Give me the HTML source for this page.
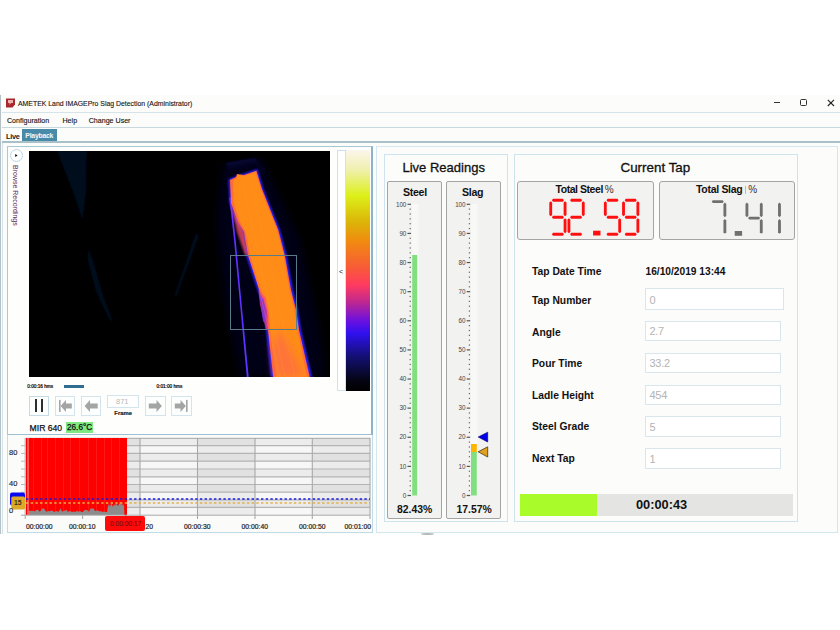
<!DOCTYPE html>
<html><head><meta charset="utf-8">
<style>
*{margin:0;padding:0;box-sizing:border-box}
html,body{width:840px;height:630px;overflow:hidden;background:#fff;font-family:"Liberation Sans",sans-serif;color:#111}
.a{position:absolute}
.t{position:absolute;white-space:pre;line-height:1}
</style></head><body>
<!-- window -->
<div class="a" style="left:0;top:95px;width:840px;height:439px;background:#fcfcfa"></div>
<div class="a" style="left:0;top:95px;width:1px;height:439px;background:#b4c0c5"></div>
<div class="a" style="left:2px;top:142px;width:1px;height:392px;background:#d3e3ea"></div>

<!-- title bar -->
<svg class="a" style="left:5px;top:98px" width="11" height="10" viewBox="0 0 11 10">
<path d="M1 0.5 H10 V6.5 L7.5 9.5 H1 Z" fill="#a8282c"/>
<path d="M3 2 H8 V5 H6 L4.5 7 V5 H3 Z" fill="#e8b0b0"/>
</svg>
<div class="t" style="left:18px;top:100.8px;font-size:6.9px;color:#111;-webkit-text-stroke:0.1px #111">AMETEK Land IMAGEPro Slag Detection (Administrator)</div>
<div class="a" style="left:773.5px;top:102px;width:6px;height:1.2px;background:#333"></div>
<div class="a" style="left:800px;top:99px;width:7px;height:7px;border:1.2px solid #333;border-radius:1.5px"></div>
<svg class="a" style="left:827px;top:98.5px" width="8" height="8" viewBox="0 0 8 8"><path d="M0.8 0.8 L7 7 M7 0.8 L0.8 7" stroke="#222" stroke-width="1.1"/></svg>
<div class="a" style="left:1.5px;top:112px;width:839px;height:1px;background:#d5e4ea"></div>

<!-- menu -->
<div class="t" style="left:7px;top:117.6px;font-size:7.1px;color:#111;-webkit-text-stroke:0.12px #111">Configuration</div>
<div class="t" style="left:62.5px;top:117.6px;font-size:7.1px;color:#111;-webkit-text-stroke:0.12px #111">Help</div>
<div class="t" style="left:88.7px;top:117.6px;font-size:7.1px;color:#111;-webkit-text-stroke:0.12px #111">Change User</div>
<div class="a" style="left:1.5px;top:127px;width:839px;height:1px;background:#c8d8df"></div>

<!-- tabs -->
<div class="t" style="left:6px;top:132.5px;font-size:7.4px;font-weight:700;letter-spacing:-0.3px;color:#222">Live</div>
<div class="a" style="left:22px;top:129px;width:35px;height:13px;background:#4a8aa9"></div>
<div class="t" style="left:25.3px;top:133.4px;font-size:6.9px;font-weight:700;letter-spacing:-0.25px;color:#f4f8fa">Playback</div>
<div class="a" style="left:1.5px;top:141.3px;width:839px;height:1.5px;background:#aac0c8"></div>

<!-- left video panel -->
<div class="a" style="left:6.5px;top:146px;width:366.5px;height:289.5px;border:1.5px solid #a9c8d6;border-right:2px solid #8fb3c6;border-bottom:2px solid #9fc0d0;background:#fefefd"></div>
<div class="a" style="left:10px;top:149px;width:13px;height:13px;border:1px solid #bcd8e4;border-radius:50%;background:#fff"></div>
<svg class="a" style="left:14px;top:153px" width="5" height="5"><path d="M1.2 1 L3.6 2.5 L1.2 4Z" fill="#111"/></svg>
<div class="t" style="left:13.7px;top:165px;font-size:7px;color:#5a2a5a;transform-origin:0 0;transform:rotate(90deg) translate(0,-5px)">Browse Recordings</div>

<!-- thermal image -->
<svg class="a" style="left:29px;top:151px" width="301" height="226" viewBox="29 151 301 226">
<defs>
<filter id="bl1" x="-50%" y="-50%" width="200%" height="200%"><feGaussianBlur stdDeviation="4"/></filter>
<filter id="bl2" x="-50%" y="-50%" width="200%" height="200%"><feGaussianBlur stdDeviation="1.2"/></filter>
<filter id="bl3" x="-50%" y="-50%" width="200%" height="200%"><feGaussianBlur stdDeviation="0.6"/></filter>
<clipPath id="vc"><rect x="29" y="151" width="301" height="226"/></clipPath>
</defs>
<rect x="29" y="151" width="301" height="226" fill="#000"/>
<g clip-path="url(#vc)">
<path d="M57 151 L87 151 L86 195 L82.5 221 L74 195 Z" fill="#05081e" filter="url(#bl2)"/>
<path d="M88 247 L93 260 L104 298 L114 323 L109 319 L96 292 L88 262 Z" fill="#05081c" filter="url(#bl2)"/>
<path d="M196 232 L174 296 L177 296 L199 236 Z" fill="#05081c" filter="url(#bl2)"/>
<path d="M226 163 L255 158 L266 172 L258 178 L232 182 Z" fill="#0a1050" filter="url(#bl2)"/>
<path d="M222 166 L262 158 L300 240 L320 330 L326 377 L240 377 L224 300 L216 220 Z" fill="#020418" filter="url(#bl1)"/>
<path d="M228.5 179 L257.5 169 L263.5 189 L280 230 L286.5 255 L293 290 L298 310 L301 330 L312 377 L271 377 L266 330 L265 310 L257.5 290 L246 255 L242 232 L236 222 L229.5 203 Z" fill="#3020ff" filter="url(#bl2)"/>
<path d="M229.3 198 L231 197 L235.7 240 L242.2 310 L248.7 377 L246.8 377 L240.6 310 L234 240 Z" fill="#6030ff" filter="url(#bl3)"/>
<path d="M231 203 L244 232 L247.9 255 L245 255 L237 232 Z" fill="#ff5060" opacity="0.75" filter="url(#bl2)"/>
<path d="M230 180 L236 177 L237 174 L244 175 L256.4 170.7 L262 189 L278.3 230 L284.7 255 L291 290 L296.1 310 L299 330 L309.7 377 L273.2 377 L268 330 L266.9 310 L259.3 290 L247.9 255 L244 232 L238 222 L231 203 Z" fill="#ff6a3a" filter="url(#bl3)"/>
<path d="M233 181 L237 178 L238 175 L244 176 L255.5 172 L261 190 L277 230 L283.5 255 L289.5 290 L294.5 310 L297.5 330 L307 377 L276 377 L270 330 L268.5 310 L261 290 L250 255 L246 232 L240 222 L233.5 203 Z" fill="#ff8c18" filter="url(#bl3)"/>
<path d="M280 330 L305 377 L274 377 L271 345 Z" fill="#ff5070" opacity="0.4" filter="url(#bl1)"/>
<path d="M258.5 290 L266 298 L269 330 L266 330 L260 305 Z" fill="#ff4a7a" opacity="0.7" filter="url(#bl3)"/>
<path d="M259 293 L264 300 L266 322 L263 322 Z" fill="#7a30ff" opacity="0.7" filter="url(#bl3)"/>
<g stroke="#ffa030" stroke-width="0.8" opacity="0.3">
<line x1="242" y1="180" x2="285" y2="377"/><line x1="250" y1="178" x2="295" y2="377"/><line x1="238" y1="200" x2="280" y2="377"/>
</g>
</g>
<rect x="230.5" y="255.5" width="66" height="74" fill="none" stroke="#5a7a8a" stroke-width="1"/>
</svg>

<!-- color bar -->
<div class="a" style="left:337px;top:150px;width:9px;height:241px;border:1px solid #cfe2ea;background:#fff"></div>
<div class="a" style="left:346px;top:150px;width:23.5px;height:241px;background:linear-gradient(to bottom,#fbf6ec 0%,#f0f0b0 8%,#dcf018 19%,#dcb408 30%,#f08a10 38%,#f85a38 49%,#ff3a60 56%,#c02890 63%,#6a10e0 71%,#3010f0 76%,#121070 86%,#040410 96%,#000 100%)"></div>
<div class="t" style="left:339px;top:267.5px;font-size:7px;color:#222">&lt;</div>

<!-- timestamps & buttons -->
<div class="t" style="left:27.3px;top:385.2px;font-size:4.7px;color:#000;-webkit-text-stroke:0.2px #000">0:00:16 hms</div>
<div class="a" style="left:63.5px;top:384.5px;width:20.5px;height:3px;background:#2f6e90"></div>
<div class="t" style="left:156.5px;top:385.2px;font-size:4.7px;color:#000;-webkit-text-stroke:0.2px #000">0:01:00 hms</div>

<div class="a" style="left:29px;top:395.5px;width:20px;height:20px;border:1px solid #c4dbe6;background:#fdfefe"></div>
<div class="a" style="left:35px;top:399px;width:2.1px;height:13px;background:#2e2e2e"></div>
<div class="a" style="left:41px;top:399px;width:2.1px;height:13px;background:#2e2e2e"></div>
<div class="a" style="left:55px;top:395.5px;width:20px;height:20px;border:1px solid #d4e4ec;background:#fdfefe"></div>
<svg class="a" style="left:55px;top:395.5px" width="20" height="20"><rect x="4" y="3.9" width="1.6" height="12" fill="#a4a4a4"/><path d="M5.6 9.9 L11 3.9 V7.4 H16.8 V12.6 H11 V15.9 Z" fill="#a4a4a4"/></svg>
<div class="a" style="left:81px;top:395.5px;width:20px;height:20px;border:1px solid #d4e4ec;background:#fdfefe"></div>
<svg class="a" style="left:81px;top:395.5px" width="20" height="20"><path d="M3.6 9.9 L9 3.9 V7.4 H16.7 V12.6 H9 V15.9 Z" fill="#a4a4a4"/></svg>
<div class="a" style="left:107px;top:394.5px;width:31.5px;height:13px;border:1px solid #d4e4ec;background:#fff"></div>
<div class="t" style="left:116px;top:397.5px;font-size:7.5px;color:#b8b8b8">871</div>
<div class="t" style="left:114.3px;top:410.5px;font-size:5.9px;font-weight:700;color:#111;-webkit-text-stroke:0.15px #111">Frame</div>
<div class="a" style="left:145px;top:395.5px;width:20.5px;height:20px;border:1px solid #d4e4ec;background:#fdfefe"></div>
<svg class="a" style="left:145px;top:395.5px" width="20" height="20"><path d="M16.9 9.9 L11.5 3.9 V7.4 H3.8 V12.6 H11.5 V15.9 Z" fill="#a4a4a4"/></svg>
<div class="a" style="left:171px;top:395.5px;width:20.5px;height:20px;border:1px solid #d4e4ec;background:#fdfefe"></div>
<svg class="a" style="left:171px;top:395.5px" width="20" height="20"><rect x="15" y="3.9" width="1.6" height="12" fill="#a4a4a4"/><path d="M14.9 9.9 L9.5 3.9 V7.4 H3.8 V12.6 H9.5 V15.9 Z" fill="#a4a4a4"/></svg>

<div class="t" style="left:29.6px;top:424px;font-size:8.6px;color:#111;-webkit-text-stroke:0.25px #111">MIR 640</div>
<div class="a" style="left:66px;top:422px;width:26.5px;height:10.5px;background:#80e880"></div>
<div class="t" style="left:67px;top:424px;font-size:8.2px;color:#111;-webkit-text-stroke:0.25px #111">26.6°C</div>

<!-- chart panel -->
<div class="a" style="left:6.5px;top:435px;width:366.5px;height:98px;border:1px solid #bfdce8;border-top:none;background:#fbfbfa"></div>
<svg class="a" style="left:0;top:430px" width="380" height="105" viewBox="0 430 380 105">
<defs>
<pattern id="rows" x="0" y="438" width="380" height="15.6" patternUnits="userSpaceOnUse">
<rect x="0" y="0" width="380" height="7.8" fill="#ececec"/><rect x="0" y="7.8" width="380" height="7.8" fill="#f7f7f7"/>
</pattern>
</defs>
<rect x="25.7" y="438" width="344.5" height="77" fill="url(#rows)"/>
<rect x="82.6" y="438" width="57.4" height="77" fill="#000" opacity="0.045"/>
<rect x="197.5" y="438" width="57.4" height="77" fill="#000" opacity="0.045"/>
<rect x="312.3" y="438" width="57.4" height="77" fill="#000" opacity="0.045"/>
<g stroke="#b4b4b4" stroke-width="1.2">
<line x1="25.7" y1="438.3" x2="370" y2="438.3"/>
<line x1="25.7" y1="445.7" x2="370" y2="445.7"/>
<line x1="25.7" y1="453.4" x2="370" y2="453.4"/>
<line x1="25.7" y1="461.2" x2="370" y2="461.2"/>
<line x1="25.7" y1="469" x2="370" y2="469"/>
<line x1="25.7" y1="476.8" x2="370" y2="476.8"/>
<line x1="25.7" y1="484.5" x2="370" y2="484.5"/>
<line x1="25.7" y1="492.2" x2="370" y2="492.2"/>
<line x1="25.7" y1="499.8" x2="370" y2="499.8"/>
<line x1="25.7" y1="507.3" x2="370" y2="507.3"/>
</g>
<g stroke="#a8a8a8" stroke-width="1.1">
<line x1="82.6" y1="438" x2="82.6" y2="519"/>
<line x1="140" y1="438" x2="140" y2="519"/>
<line x1="197.5" y1="438" x2="197.5" y2="519"/>
<line x1="255" y1="438" x2="255" y2="519"/>
<line x1="312.3" y1="438" x2="312.3" y2="519"/>
<line x1="370" y1="438" x2="370" y2="519"/>
</g>
<!-- red bars -->
<rect x="26" y="438" width="101" height="77" fill="#ff0000"/>
<g fill="#ff4040" opacity="0.35">
<rect x="33" y="438" width="1" height="77"/><rect x="41" y="438" width="1" height="77"/><rect x="47" y="438" width="1" height="77"/>
<rect x="55" y="438" width="1" height="77"/><rect x="63" y="438" width="1" height="77"/><rect x="70" y="438" width="1" height="77"/>
<rect x="79" y="438" width="1" height="77"/><rect x="88" y="438" width="1" height="77"/><rect x="96" y="438" width="1" height="77"/>
<rect x="104" y="438" width="1" height="77"/><rect x="111" y="438" width="1" height="77"/><rect x="119" y="438" width="1" height="77"/>
</g>
<rect x="27.5" y="438" width="1" height="77" fill="#ffb0b0"/>
<path d="M29 515 L29.0 510.4 L30.5 511.1 L32.0 510.7 L33.5 511.2 L35.0 511.3 L36.5 510.0 L38.0 509.8 L39.5 511.8 L41.0 510.4 L42.5 508.5 L44.0 508.5 L45.5 510.9 L47.0 511.8 L48.5 510.9 L50.0 511.3 L51.5 510.2 L53.0 511.3 L54.5 511.9 L56.0 511.1 L57.5 511.6 L59.0 511.4 L60.5 508.5 L62.0 511.6 L63.5 511.2 L65.0 510.5 L66.5 509.9 L68.0 511.9 L69.5 510.9 L71.0 511.5 L72.5 511.9 L74.0 511.5 L75.5 512.0 L77.0 510.7 L78.5 511.7 L80.0 510.9 L81.5 512.0 L83.0 511.9 L84.5 510.0 L86.0 510.1 L87.5 510.3 L89.0 512.1 L90.5 508.5 L92.0 508.5 L93.5 508.5 L95.0 511.0 L96.5 510.7 L98.0 510.6 L99.5 511.2 L101.0 511.2 L102.5 512.0 L104.0 511.4 L105.5 512.0 L107.0 511.9 L108.0 506.0 L109.0 504.0 L110.0 507.0 L111.0 503.5 L112.0 505.0 L113.0 507.0 L114.0 504.0 L115.0 506.0 L116.0 503.0 L117.0 505.0 L118.0 506.0 L119.0 504.0 L120.0 502.0 L121.0 505.0 L122.0 503.0 L123.0 506.0 L124.0 504.0 L124.5 515 Z" fill="#8c8c8c"/>
<line x1="125.5" y1="438" x2="125.5" y2="516" stroke="#ff0000" stroke-width="1.5"/>
<!-- axis -->
<line x1="21" y1="515.2" x2="370" y2="515.2" stroke="#a8a8a8" stroke-width="1"/>
<line x1="25.2" y1="438" x2="25.2" y2="519" stroke="#a8a8a8" stroke-width="1"/>
<g stroke="#b8b8b8" stroke-width="1">
<line x1="21" y1="445.7" x2="25" y2="445.7"/><line x1="21" y1="453.4" x2="25" y2="453.4"/><line x1="21" y1="461.2" x2="25" y2="461.2"/>
<line x1="21" y1="469" x2="25" y2="469"/><line x1="21" y1="476.8" x2="25" y2="476.8"/><line x1="21" y1="484.5" x2="25" y2="484.5"/>
<line x1="21" y1="492.2" x2="25" y2="492.2"/><line x1="21" y1="499.8" x2="25" y2="499.8"/><line x1="21" y1="507.3" x2="25" y2="507.3"/>
</g>
<!-- dotted thresholds -->
<line x1="26" y1="499" x2="370" y2="499" stroke="#1818e0" stroke-width="1.7" stroke-dasharray="2.4 2.3"/>
<line x1="26" y1="503" x2="370" y2="503" stroke="#e4b048" stroke-width="1.7" stroke-dasharray="2.4 2.3"/>
<!-- tags -->
<rect x="10" y="492.5" width="15" height="13" rx="2" fill="#0a0af0"/>
<rect x="11.3" y="496.5" width="13.7" height="13" rx="1.5" fill="#dca828"/>
</svg>
<div class="t" style="left:14px;top:499.5px;font-size:6.8px;font-weight:700;color:#3a3010">15</div>
<div class="t" style="left:9px;top:449.4px;font-size:7.5px;color:#222;-webkit-text-stroke:0.15px #222">80</div>
<div class="t" style="left:9px;top:480.1px;font-size:7.5px;color:#222;-webkit-text-stroke:0.15px #222">40</div>
<div class="t" style="left:9px;top:506.5px;font-size:7.5px;color:#222;-webkit-text-stroke:0.15px #222">0</div>
<div class="t" style="left:26px;top:524px;font-size:6.8px;color:#222;-webkit-text-stroke:0.2px #222">00:00:00</div>
<div class="t" style="left:69px;top:524px;font-size:6.8px;color:#222;-webkit-text-stroke:0.2px #222">00:00:10</div>
<div class="t" style="left:126.5px;top:524px;font-size:6.8px;color:#222;-webkit-text-stroke:0.2px #222">00:00:20</div>
<div class="t" style="left:184px;top:524px;font-size:6.8px;color:#222;-webkit-text-stroke:0.2px #222">00:00:30</div>
<div class="t" style="left:241.5px;top:524px;font-size:6.8px;color:#222;-webkit-text-stroke:0.2px #222">00:00:40</div>
<div class="t" style="left:299px;top:524px;font-size:6.8px;color:#222;-webkit-text-stroke:0.2px #222">00:00:50</div>
<div class="t" style="left:344.5px;top:524px;font-size:6.8px;color:#222;-webkit-text-stroke:0.2px #222">00:01:00</div>
<div class="a" style="left:105px;top:515.5px;width:40px;height:15px;background:#ff0a0a;border-radius:2px"></div>
<div class="t" style="left:110px;top:521px;font-size:6.6px;color:#701010;-webkit-text-stroke:0.1px #701010">0:00:00:17</div>

<!-- middle panel -->
<div class="a" style="left:375.5px;top:146px;width:462.5px;height:386.5px;border:1.2px solid #d3e8f0"></div>
<div class="a" style="left:384px;top:154px;width:124px;height:368px;border:1.2px solid #cde4ee"></div>
<div class="t" style="left:402.5px;top:161px;font-size:13px;color:#111;-webkit-text-stroke:0.3px #111">Live Readings</div>

<div class="a" style="left:387.2px;top:180.5px;width:54.8px;height:338px;border:1.2px solid #a4a4a4;border-radius:2px;background:#f2f2f1"></div>
<div class="t" style="left:403px;top:187.2px;font-size:10.6px;letter-spacing:-0.3px;font-weight:700;color:#111">Steel</div>
<div class="a" style="left:446.4px;top:180.5px;width:54.8px;height:338px;border:1.2px solid #a4a4a4;border-radius:2px;background:#f2f2f1"></div>
<div class="t" style="left:462px;top:187.4px;font-size:10.6px;letter-spacing:-0.3px;font-weight:700;color:#111">Slag</div>
<svg class="a" style="left:385px;top:195px" width="122" height="310" viewBox="385 195 122 310">
<rect x="412" y="204" width="6.5" height="291.5" fill="#f8f8f7"/>
<rect x="471" y="204" width="6.5" height="291.5" fill="#f8f8f7"/>
<rect x="412.2" y="255" width="5" height="240.5" fill="#80e080"/>
<rect x="471" y="444" width="5.8" height="8" fill="#ffb400"/>
<rect x="471" y="452" width="5.8" height="43.5" fill="#80e080"/>
<path d="M478.2 437 L487.7 432.2 L487.7 442 Z" fill="#0000e8" stroke="#000060" stroke-width="0.6"/>
<path d="M478.2 451.8 L487.7 446.8 L487.7 457 Z" fill="#e0a020" stroke="#4a3a10" stroke-width="0.8"/>
<rect x="407.5" y="494.90" width="3.5" height="1.2" fill="#555"/>
<text x="406.0" y="497.70" font-size="6.3" text-anchor="end" fill="#444" font-family="Liberation Sans" letter-spacing="-0.2">0</text>
<rect x="409.6" y="490.05" width="1.2" height="1.2" fill="#666"/>
<rect x="409.6" y="485.19" width="1.2" height="1.2" fill="#666"/>
<rect x="409.6" y="480.34" width="1.2" height="1.2" fill="#666"/>
<rect x="409.6" y="475.49" width="1.2" height="1.2" fill="#666"/>
<rect x="409.6" y="470.63" width="1.2" height="1.2" fill="#666"/>
<rect x="407.5" y="465.78" width="3.5" height="1.2" fill="#555"/>
<text x="406.0" y="468.58" font-size="6.3" text-anchor="end" fill="#444" font-family="Liberation Sans" letter-spacing="-0.2">10</text>
<rect x="409.6" y="460.93" width="1.2" height="1.2" fill="#666"/>
<rect x="409.6" y="456.07" width="1.2" height="1.2" fill="#666"/>
<rect x="409.6" y="451.22" width="1.2" height="1.2" fill="#666"/>
<rect x="409.6" y="446.37" width="1.2" height="1.2" fill="#666"/>
<rect x="409.6" y="441.51" width="1.2" height="1.2" fill="#666"/>
<rect x="407.5" y="436.66" width="3.5" height="1.2" fill="#555"/>
<text x="406.0" y="439.46" font-size="6.3" text-anchor="end" fill="#444" font-family="Liberation Sans" letter-spacing="-0.2">20</text>
<rect x="409.6" y="431.81" width="1.2" height="1.2" fill="#666"/>
<rect x="409.6" y="426.95" width="1.2" height="1.2" fill="#666"/>
<rect x="409.6" y="422.10" width="1.2" height="1.2" fill="#666"/>
<rect x="409.6" y="417.25" width="1.2" height="1.2" fill="#666"/>
<rect x="409.6" y="412.39" width="1.2" height="1.2" fill="#666"/>
<rect x="407.5" y="407.54" width="3.5" height="1.2" fill="#555"/>
<text x="406.0" y="410.34" font-size="6.3" text-anchor="end" fill="#444" font-family="Liberation Sans" letter-spacing="-0.2">30</text>
<rect x="409.6" y="402.69" width="1.2" height="1.2" fill="#666"/>
<rect x="409.6" y="397.83" width="1.2" height="1.2" fill="#666"/>
<rect x="409.6" y="392.98" width="1.2" height="1.2" fill="#666"/>
<rect x="409.6" y="388.13" width="1.2" height="1.2" fill="#666"/>
<rect x="409.6" y="383.27" width="1.2" height="1.2" fill="#666"/>
<rect x="407.5" y="378.42" width="3.5" height="1.2" fill="#555"/>
<text x="406.0" y="381.22" font-size="6.3" text-anchor="end" fill="#444" font-family="Liberation Sans" letter-spacing="-0.2">40</text>
<rect x="409.6" y="373.57" width="1.2" height="1.2" fill="#666"/>
<rect x="409.6" y="368.71" width="1.2" height="1.2" fill="#666"/>
<rect x="409.6" y="363.86" width="1.2" height="1.2" fill="#666"/>
<rect x="409.6" y="359.01" width="1.2" height="1.2" fill="#666"/>
<rect x="409.6" y="354.15" width="1.2" height="1.2" fill="#666"/>
<rect x="407.5" y="349.30" width="3.5" height="1.2" fill="#555"/>
<text x="406.0" y="352.10" font-size="6.3" text-anchor="end" fill="#444" font-family="Liberation Sans" letter-spacing="-0.2">50</text>
<rect x="409.6" y="344.45" width="1.2" height="1.2" fill="#666"/>
<rect x="409.6" y="339.59" width="1.2" height="1.2" fill="#666"/>
<rect x="409.6" y="334.74" width="1.2" height="1.2" fill="#666"/>
<rect x="409.6" y="329.89" width="1.2" height="1.2" fill="#666"/>
<rect x="409.6" y="325.03" width="1.2" height="1.2" fill="#666"/>
<rect x="407.5" y="320.18" width="3.5" height="1.2" fill="#555"/>
<text x="406.0" y="322.98" font-size="6.3" text-anchor="end" fill="#444" font-family="Liberation Sans" letter-spacing="-0.2">60</text>
<rect x="409.6" y="315.33" width="1.2" height="1.2" fill="#666"/>
<rect x="409.6" y="310.47" width="1.2" height="1.2" fill="#666"/>
<rect x="409.6" y="305.62" width="1.2" height="1.2" fill="#666"/>
<rect x="409.6" y="300.77" width="1.2" height="1.2" fill="#666"/>
<rect x="409.6" y="295.91" width="1.2" height="1.2" fill="#666"/>
<rect x="407.5" y="291.06" width="3.5" height="1.2" fill="#555"/>
<text x="406.0" y="293.86" font-size="6.3" text-anchor="end" fill="#444" font-family="Liberation Sans" letter-spacing="-0.2">70</text>
<rect x="409.6" y="286.21" width="1.2" height="1.2" fill="#666"/>
<rect x="409.6" y="281.35" width="1.2" height="1.2" fill="#666"/>
<rect x="409.6" y="276.50" width="1.2" height="1.2" fill="#666"/>
<rect x="409.6" y="271.65" width="1.2" height="1.2" fill="#666"/>
<rect x="409.6" y="266.79" width="1.2" height="1.2" fill="#666"/>
<rect x="407.5" y="261.94" width="3.5" height="1.2" fill="#555"/>
<text x="406.0" y="264.74" font-size="6.3" text-anchor="end" fill="#444" font-family="Liberation Sans" letter-spacing="-0.2">80</text>
<rect x="409.6" y="257.09" width="1.2" height="1.2" fill="#666"/>
<rect x="409.6" y="252.23" width="1.2" height="1.2" fill="#666"/>
<rect x="409.6" y="247.38" width="1.2" height="1.2" fill="#666"/>
<rect x="409.6" y="242.53" width="1.2" height="1.2" fill="#666"/>
<rect x="409.6" y="237.67" width="1.2" height="1.2" fill="#666"/>
<rect x="407.5" y="232.82" width="3.5" height="1.2" fill="#555"/>
<text x="406.0" y="235.62" font-size="6.3" text-anchor="end" fill="#444" font-family="Liberation Sans" letter-spacing="-0.2">90</text>
<rect x="409.6" y="227.97" width="1.2" height="1.2" fill="#666"/>
<rect x="409.6" y="223.11" width="1.2" height="1.2" fill="#666"/>
<rect x="409.6" y="218.26" width="1.2" height="1.2" fill="#666"/>
<rect x="409.6" y="213.41" width="1.2" height="1.2" fill="#666"/>
<rect x="409.6" y="208.55" width="1.2" height="1.2" fill="#666"/>
<rect x="407.5" y="203.70" width="3.5" height="1.2" fill="#555"/>
<text x="406.0" y="206.50" font-size="6.3" text-anchor="end" fill="#444" font-family="Liberation Sans" letter-spacing="-0.2">100</text>
<rect x="466.7" y="494.90" width="3.5" height="1.2" fill="#555"/>
<text x="465.2" y="497.70" font-size="6.3" text-anchor="end" fill="#444" font-family="Liberation Sans" letter-spacing="-0.2">0</text>
<rect x="468.8" y="490.05" width="1.2" height="1.2" fill="#666"/>
<rect x="468.8" y="485.19" width="1.2" height="1.2" fill="#666"/>
<rect x="468.8" y="480.34" width="1.2" height="1.2" fill="#666"/>
<rect x="468.8" y="475.49" width="1.2" height="1.2" fill="#666"/>
<rect x="468.8" y="470.63" width="1.2" height="1.2" fill="#666"/>
<rect x="466.7" y="465.78" width="3.5" height="1.2" fill="#555"/>
<text x="465.2" y="468.58" font-size="6.3" text-anchor="end" fill="#444" font-family="Liberation Sans" letter-spacing="-0.2">10</text>
<rect x="468.8" y="460.93" width="1.2" height="1.2" fill="#666"/>
<rect x="468.8" y="456.07" width="1.2" height="1.2" fill="#666"/>
<rect x="468.8" y="451.22" width="1.2" height="1.2" fill="#666"/>
<rect x="468.8" y="446.37" width="1.2" height="1.2" fill="#666"/>
<rect x="468.8" y="441.51" width="1.2" height="1.2" fill="#666"/>
<rect x="466.7" y="436.66" width="3.5" height="1.2" fill="#555"/>
<text x="465.2" y="439.46" font-size="6.3" text-anchor="end" fill="#444" font-family="Liberation Sans" letter-spacing="-0.2">20</text>
<rect x="468.8" y="431.81" width="1.2" height="1.2" fill="#666"/>
<rect x="468.8" y="426.95" width="1.2" height="1.2" fill="#666"/>
<rect x="468.8" y="422.10" width="1.2" height="1.2" fill="#666"/>
<rect x="468.8" y="417.25" width="1.2" height="1.2" fill="#666"/>
<rect x="468.8" y="412.39" width="1.2" height="1.2" fill="#666"/>
<rect x="466.7" y="407.54" width="3.5" height="1.2" fill="#555"/>
<text x="465.2" y="410.34" font-size="6.3" text-anchor="end" fill="#444" font-family="Liberation Sans" letter-spacing="-0.2">30</text>
<rect x="468.8" y="402.69" width="1.2" height="1.2" fill="#666"/>
<rect x="468.8" y="397.83" width="1.2" height="1.2" fill="#666"/>
<rect x="468.8" y="392.98" width="1.2" height="1.2" fill="#666"/>
<rect x="468.8" y="388.13" width="1.2" height="1.2" fill="#666"/>
<rect x="468.8" y="383.27" width="1.2" height="1.2" fill="#666"/>
<rect x="466.7" y="378.42" width="3.5" height="1.2" fill="#555"/>
<text x="465.2" y="381.22" font-size="6.3" text-anchor="end" fill="#444" font-family="Liberation Sans" letter-spacing="-0.2">40</text>
<rect x="468.8" y="373.57" width="1.2" height="1.2" fill="#666"/>
<rect x="468.8" y="368.71" width="1.2" height="1.2" fill="#666"/>
<rect x="468.8" y="363.86" width="1.2" height="1.2" fill="#666"/>
<rect x="468.8" y="359.01" width="1.2" height="1.2" fill="#666"/>
<rect x="468.8" y="354.15" width="1.2" height="1.2" fill="#666"/>
<rect x="466.7" y="349.30" width="3.5" height="1.2" fill="#555"/>
<text x="465.2" y="352.10" font-size="6.3" text-anchor="end" fill="#444" font-family="Liberation Sans" letter-spacing="-0.2">50</text>
<rect x="468.8" y="344.45" width="1.2" height="1.2" fill="#666"/>
<rect x="468.8" y="339.59" width="1.2" height="1.2" fill="#666"/>
<rect x="468.8" y="334.74" width="1.2" height="1.2" fill="#666"/>
<rect x="468.8" y="329.89" width="1.2" height="1.2" fill="#666"/>
<rect x="468.8" y="325.03" width="1.2" height="1.2" fill="#666"/>
<rect x="466.7" y="320.18" width="3.5" height="1.2" fill="#555"/>
<text x="465.2" y="322.98" font-size="6.3" text-anchor="end" fill="#444" font-family="Liberation Sans" letter-spacing="-0.2">60</text>
<rect x="468.8" y="315.33" width="1.2" height="1.2" fill="#666"/>
<rect x="468.8" y="310.47" width="1.2" height="1.2" fill="#666"/>
<rect x="468.8" y="305.62" width="1.2" height="1.2" fill="#666"/>
<rect x="468.8" y="300.77" width="1.2" height="1.2" fill="#666"/>
<rect x="468.8" y="295.91" width="1.2" height="1.2" fill="#666"/>
<rect x="466.7" y="291.06" width="3.5" height="1.2" fill="#555"/>
<text x="465.2" y="293.86" font-size="6.3" text-anchor="end" fill="#444" font-family="Liberation Sans" letter-spacing="-0.2">70</text>
<rect x="468.8" y="286.21" width="1.2" height="1.2" fill="#666"/>
<rect x="468.8" y="281.35" width="1.2" height="1.2" fill="#666"/>
<rect x="468.8" y="276.50" width="1.2" height="1.2" fill="#666"/>
<rect x="468.8" y="271.65" width="1.2" height="1.2" fill="#666"/>
<rect x="468.8" y="266.79" width="1.2" height="1.2" fill="#666"/>
<rect x="466.7" y="261.94" width="3.5" height="1.2" fill="#555"/>
<text x="465.2" y="264.74" font-size="6.3" text-anchor="end" fill="#444" font-family="Liberation Sans" letter-spacing="-0.2">80</text>
<rect x="468.8" y="257.09" width="1.2" height="1.2" fill="#666"/>
<rect x="468.8" y="252.23" width="1.2" height="1.2" fill="#666"/>
<rect x="468.8" y="247.38" width="1.2" height="1.2" fill="#666"/>
<rect x="468.8" y="242.53" width="1.2" height="1.2" fill="#666"/>
<rect x="468.8" y="237.67" width="1.2" height="1.2" fill="#666"/>
<rect x="466.7" y="232.82" width="3.5" height="1.2" fill="#555"/>
<text x="465.2" y="235.62" font-size="6.3" text-anchor="end" fill="#444" font-family="Liberation Sans" letter-spacing="-0.2">90</text>
<rect x="468.8" y="227.97" width="1.2" height="1.2" fill="#666"/>
<rect x="468.8" y="223.11" width="1.2" height="1.2" fill="#666"/>
<rect x="468.8" y="218.26" width="1.2" height="1.2" fill="#666"/>
<rect x="468.8" y="213.41" width="1.2" height="1.2" fill="#666"/>
<rect x="468.8" y="208.55" width="1.2" height="1.2" fill="#666"/>
<rect x="466.7" y="203.70" width="3.5" height="1.2" fill="#555"/>
<text x="465.2" y="206.50" font-size="6.3" text-anchor="end" fill="#444" font-family="Liberation Sans" letter-spacing="-0.2">100</text>
</svg>
<div class="t" style="left:397px;top:505px;font-size:10.4px;font-weight:700;color:#111">82.43%</div>
<div class="t" style="left:456.5px;top:505px;font-size:10.4px;font-weight:700;color:#111">17.57%</div>

<!-- current tap -->
<div class="a" style="left:514px;top:154px;width:284px;height:368px;border:1.2px solid #cde4ee"></div>
<div class="t" style="left:620.5px;top:160.7px;font-size:13.4px;color:#111;-webkit-text-stroke:0.3px #111">Current Tap</div>
<div class="a" style="left:517px;top:180.5px;width:136.5px;height:59px;border:1.2px solid #a4a4a4;border-radius:3px;background:#f2f2f1"></div>
<div class="t" style="left:555.5px;top:184.2px;font-size:10.5px;font-weight:700;letter-spacing:-0.45px;color:#111">Total Steel</div>
<div class="t" style="left:604.8px;top:184.6px;font-size:10px;color:#333">%</div>
<div class="a" style="left:658.5px;top:180.5px;width:136.5px;height:59px;border:1.2px solid #a4a4a4;border-radius:3px;background:#f2f2f1"></div>
<div class="t" style="left:696px;top:184.2px;font-size:10.5px;font-weight:700;letter-spacing:-0.3px;color:#111">Total Slag</div>
<div class="a" style="left:744.5px;top:186px;width:0.8px;height:8px;background:#a0c0d0"></div>
<div class="t" style="left:748.3px;top:184.6px;font-size:10px;color:#333">%</div>
<svg class="a" style="left:517px;top:180px" width="280" height="60" viewBox="517 180 280 60" id="segs"><path d="M551.87 200.23 L553.00 198.80 L562.79 198.80 L563.93 200.23 L562.79 201.65 L553.00 201.65 Z" fill="#ff1010"/>
<path d="M551.87 217.25 L553.00 215.82 L562.79 215.82 L563.93 217.25 L562.79 218.68 L553.00 218.68 Z" fill="#ff1010"/>
<path d="M551.87 234.27 L553.00 232.85 L562.79 232.85 L563.93 234.27 L562.79 235.70 L553.00 235.70 Z" fill="#ff1010"/>
<path d="M550.72 201.13 L552.15 202.55 L552.15 214.92 L550.72 216.35 L549.30 214.92 L549.30 202.55 Z" fill="#ff1010"/>
<path d="M565.08 201.13 L566.50 202.55 L566.50 214.92 L565.08 216.35 L563.65 214.92 L563.65 202.55 Z" fill="#ff1010"/>
<path d="M565.08 218.15 L566.50 219.58 L566.50 231.95 L565.08 233.37 L563.65 231.95 L563.65 219.58 Z" fill="#ff1010"/>
<path d="M570.07 200.23 L571.21 198.80 L581.00 198.80 L582.13 200.23 L581.00 201.65 L571.21 201.65 Z" fill="#ff1010"/>
<path d="M570.07 217.25 L571.21 215.82 L581.00 215.82 L582.13 217.25 L581.00 218.68 L571.21 218.68 Z" fill="#ff1010"/>
<path d="M570.07 234.27 L571.21 232.85 L581.00 232.85 L582.13 234.27 L581.00 235.70 L571.21 235.70 Z" fill="#ff1010"/>
<path d="M583.28 201.13 L584.70 202.55 L584.70 214.92 L583.28 216.35 L581.85 214.92 L581.85 202.55 Z" fill="#ff1010"/>
<path d="M568.92 218.15 L570.35 219.58 L570.35 231.95 L568.92 233.37 L567.50 231.95 L567.50 219.58 Z" fill="#ff1010"/>
<rect x="593.10" y="230.70" width="7.4" height="4.8" fill="#ff1010"/>
<path d="M606.47 200.23 L607.61 198.80 L617.40 198.80 L618.54 200.23 L617.40 201.65 L607.61 201.65 Z" fill="#ff1010"/>
<path d="M606.47 217.25 L607.61 215.82 L617.40 215.82 L618.54 217.25 L617.40 218.68 L607.61 218.68 Z" fill="#ff1010"/>
<path d="M606.47 234.27 L607.61 232.85 L617.40 232.85 L618.54 234.27 L617.40 235.70 L607.61 235.70 Z" fill="#ff1010"/>
<path d="M605.33 201.13 L606.75 202.55 L606.75 214.92 L605.33 216.35 L603.90 214.92 L603.90 202.55 Z" fill="#ff1010"/>
<path d="M619.68 218.15 L621.10 219.58 L621.10 231.95 L619.68 233.37 L618.25 231.95 L618.25 219.58 Z" fill="#ff1010"/>
<path d="M624.67 200.23 L625.81 198.80 L635.60 198.80 L636.74 200.23 L635.60 201.65 L625.81 201.65 Z" fill="#ff1010"/>
<path d="M624.67 217.25 L625.81 215.82 L635.60 215.82 L636.74 217.25 L635.60 218.68 L625.81 218.68 Z" fill="#ff1010"/>
<path d="M624.67 234.27 L625.81 232.85 L635.60 232.85 L636.74 234.27 L635.60 235.70 L625.81 235.70 Z" fill="#ff1010"/>
<path d="M623.53 201.13 L624.95 202.55 L624.95 214.92 L623.53 216.35 L622.10 214.92 L622.10 202.55 Z" fill="#ff1010"/>
<path d="M637.88 201.13 L639.30 202.55 L639.30 214.92 L637.88 216.35 L636.45 214.92 L636.45 202.55 Z" fill="#ff1010"/>
<path d="M637.88 218.15 L639.30 219.58 L639.30 231.95 L637.88 233.37 L636.45 231.95 L636.45 219.58 Z" fill="#ff1010"/>
<path d="M711.67 201.62 L712.81 200.20 L722.60 200.20 L723.74 201.62 L722.60 203.05 L712.81 203.05 Z" fill="#707070"/>
<path d="M724.88 202.53 L726.30 203.95 L726.30 215.77 L724.88 217.20 L723.45 215.77 L723.45 203.95 Z" fill="#707070"/>
<path d="M724.88 219.00 L726.30 220.43 L726.30 232.25 L724.88 233.67 L723.45 232.25 L723.45 220.43 Z" fill="#707070"/>
<rect x="734.70" y="231.00" width="7.4" height="4.8" fill="#707070"/>
<path d="M748.07 218.10 L749.21 216.67 L759.00 216.67 L760.14 218.10 L759.00 219.53 L749.21 219.53 Z" fill="#707070"/>
<path d="M746.93 202.53 L748.35 203.95 L748.35 215.77 L746.93 217.20 L745.50 215.77 L745.50 203.95 Z" fill="#707070"/>
<path d="M761.28 202.53 L762.70 203.95 L762.70 215.77 L761.28 217.20 L759.85 215.77 L759.85 203.95 Z" fill="#707070"/>
<path d="M761.28 219.00 L762.70 220.43 L762.70 232.25 L761.28 233.67 L759.85 232.25 L759.85 220.43 Z" fill="#707070"/>
<path d="M779.48 202.53 L780.90 203.95 L780.90 215.77 L779.48 217.20 L778.05 215.77 L778.05 203.95 Z" fill="#707070"/>
<path d="M779.48 219.00 L780.90 220.43 L780.90 232.25 L779.48 233.67 L778.05 232.25 L778.05 220.43 Z" fill="#707070"/></svg>

<div class="t" style="left:532px;top:267.2px;font-size:10.3px;font-weight:700;color:#111">Tap Date Time</div>
<div class="t" style="left:645.5px;top:267.2px;font-size:10.2px;font-weight:700;color:#111">16/10/2019 13:44</div>
<div class="t" style="left:532px;top:295.7px;font-size:10.3px;font-weight:700;color:#111">Tap Number</div>
<div class="t" style="left:532px;top:327.7px;font-size:10.3px;font-weight:700;color:#111">Angle</div>
<div class="t" style="left:532px;top:358.7px;font-size:10.3px;font-weight:700;color:#111">Pour Time</div>
<div class="t" style="left:532px;top:391px;font-size:10.3px;font-weight:700;color:#111">Ladle Height</div>
<div class="t" style="left:532px;top:422.2px;font-size:10.3px;font-weight:700;color:#111">Steel Grade</div>
<div class="t" style="left:532px;top:454.2px;font-size:10.3px;font-weight:700;color:#111">Next Tap</div>

<div class="a" style="left:645px;top:288.3px;width:138.5px;height:21.5px;border:1px solid #d9e7ed;background:#fff"></div>
<div class="t" style="left:649.5px;top:294.5px;font-size:11px;letter-spacing:-0.3px;color:#b4b4b4">0</div>
<div class="a" style="left:645px;top:320.7px;width:135.5px;height:20.5px;border:1px solid #d9e7ed;background:#fff"></div>
<div class="t" style="left:649.5px;top:326.0px;font-size:11px;letter-spacing:-0.3px;color:#b4b4b4">2.7</div>
<div class="a" style="left:645px;top:352.5px;width:135.5px;height:20.5px;border:1px solid #d9e7ed;background:#fff"></div>
<div class="t" style="left:649.5px;top:358.0px;font-size:11px;letter-spacing:-0.3px;color:#b4b4b4">33.2</div>
<div class="a" style="left:645px;top:384.5px;width:135.5px;height:20.5px;border:1px solid #d9e7ed;background:#fff"></div>
<div class="t" style="left:649.5px;top:390.0px;font-size:11px;letter-spacing:-0.3px;color:#b4b4b4">454</div>
<div class="a" style="left:645px;top:415.5px;width:135.5px;height:21px;border:1px solid #d9e7ed;background:#fff"></div>
<div class="t" style="left:649.5px;top:421.5px;font-size:11px;letter-spacing:-0.3px;color:#b4b4b4">5</div>
<div class="a" style="left:645px;top:447.7px;width:135.5px;height:21px;border:1px solid #d9e7ed;background:#fff"></div>
<div class="t" style="left:649.5px;top:453.5px;font-size:11px;letter-spacing:-0.3px;color:#b4b4b4">1</div>

<div class="a" style="left:519.5px;top:494px;width:273.5px;height:22px;background:#e4e4e2"></div>
<div class="a" style="left:519.5px;top:494px;width:77px;height:22px;background:#aafb2a"></div>
<div class="t" style="left:636px;top:499.3px;font-size:12.8px;font-weight:700;color:#111">00:00:43</div>

<div class="a" style="left:421px;top:533px;width:13px;height:2px;border-radius:50%;background:#b8b8b8;filter:blur(0.6px)"></div>
</body></html>
